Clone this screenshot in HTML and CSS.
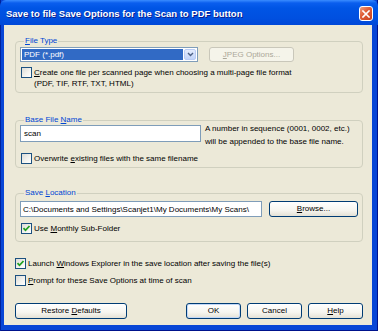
FILE: index.html
```html
<!DOCTYPE html>
<html>
<head>
<meta charset="utf-8">
<link rel="stylesheet" href="styles.css">
</head>
<body>
<div class="window">
  <div class="titlebar">
    <span class="title">Save to file Save Options for the Scan to PDF button</span>
    <span class="close"><svg width="8" height="8" viewBox="0 0 8 8"><path d="M1 1L7 7M7 1L1 7" stroke="#fff" stroke-width="1.6" stroke-linecap="square"/></svg></span>
  </div>
  <div class="frame">
    <div class="content">
      <fieldset class="group g1">
        <legend><u>F</u>ile Type</legend>
        <div class="row">
          <div class="combo">
            <span class="combo-val"><span class="sel">PDF (*.pdf)</span></span>
            <span class="combo-btn"><svg width="7" height="5" viewBox="0 0 7 5"><path d="M1 1L3.5 3.5L6 1" fill="none" stroke="#4D6185" stroke-width="1.4"/></svg></span>
          </div>
          <span class="btn disabled jpeg"><span><u>J</u>PEG Options...</span></span>
        </div>
        <div class="check c-multi">
          <span class="box"></span>
          <span class="ctext"><u>C</u>reate one file per scanned page when choosing a multi-page file format<br>(PDF, TIF, RTF, TXT, HTML)</span>
        </div>
      </fieldset>

      <fieldset class="group g2">
        <legend>Base File <u>N</u>ame</legend>
        <div class="row">
          <span class="input in-name">scan</span>
          <span class="note">A number in sequence (0001, 0002, etc.)<br>will be appended to the base file name.</span>
        </div>
        <div class="check c-over">
          <span class="box"></span>
          <span class="ctext">Overwrite <u>e</u>xisting files with the same filename</span>
        </div>
      </fieldset>

      <fieldset class="group g3">
        <legend>Save <u>L</u>ocation</legend>
        <div class="row">
          <span class="input in-path">C:\Documents and Settings\Scanjet1\My Documents\My Scans\</span>
          <span class="btn browse"><span><u>B</u>rowse...</span></span>
        </div>
        <div class="check c-month">
          <span class="box checked"><svg width="9" height="9" viewBox="0 0 9 9"><path d="M1.5 4.2L3.5 6.3L7.5 2" fill="none" stroke="#21A121" stroke-width="1.8"/></svg></span>
          <span class="ctext">Use <u>M</u>onthly Sub-Folder</span>
        </div>
      </fieldset>

      <div class="check c-launch">
        <span class="box checked"><svg width="9" height="9" viewBox="0 0 9 9"><path d="M1.5 4.2L3.5 6.3L7.5 2" fill="none" stroke="#21A121" stroke-width="1.8"/></svg></span>
        <span class="ctext">Launch <u>W</u>indows Explorer in the save location after saving the file(s)</span>
      </div>
      <div class="check c-prompt">
        <span class="box"></span>
        <span class="ctext"><u>P</u>rompt for these Save Options at time of scan</span>
      </div>

      <div class="buttons">
        <span class="btn restore"><span>Restore <u>D</u>efaults</span></span>
        <div class="btn-group">
          <span class="btn ok"><span>OK</span></span>
          <span class="btn"><span>Cancel</span></span>
          <span class="btn"><span><u>H</u>elp</span></span>
        </div>
      </div>
    </div>
  </div>
</div>
</body>
</html>
```

FILE: styles.css
```css
* { box-sizing: border-box; }
html, body { margin: 0; padding: 0; }
body {
  font-family: "Liberation Sans", Arial, sans-serif;
  font-size: 8px;
  color: #000;
  background: #0842CF;
}
u { text-decoration: underline; text-underline-offset: 1px; }

.window {
  width: 378px;
  height: 331px;
  display: flex;
  flex-direction: column;
  background: #0846D6;
  box-shadow: inset 1px 0 0 #00229C, inset -1px 0 0 #00138C, inset 0 -1px 0 #00138C;
}

.titlebar {
  height: 25px;
  flex: none;
  display: flex;
  align-items: center;
  justify-content: space-between;
  padding: 0 5px 0 6px;
  background: linear-gradient(#3A8CFF 0px, #0A5EEE 3px, #0055E5 8px, #0050E0 18px, #0048D8 25px);
  border-radius: 6px 6px 0 0;
}
.title {
  color: #fff;
  font-weight: bold;
  font-size: 9.5px;
  padding-top: 2px;
  text-shadow: 1px 1px 0 #0A1E8C;
  white-space: nowrap;
}
.close {
  width: 14px;
  height: 15px;
  margin-top: 2px;
  border: 1px solid #fff;
  border-radius: 3px;
  background: linear-gradient(135deg, #F0A080 0%, #E0603A 40%, #C8401E 100%);
  display: flex;
  align-items: center;
  justify-content: center;
}

.frame {
  flex: 1;
  padding: 0 6px 6px 4px;
  display: flex;
}
.content {
  flex: 1;
  background: #ECE9D8;
  padding: 0 9px 0 11px;
  display: flex;
  flex-direction: column;
}

.group {
  margin: 0;
  border: 1px solid #D0D0BF;
  border-radius: 4px;
  padding: 0 4px 3px 4px;
  min-width: 0;
}
.group legend {
  color: #0046D5;
  line-height: 10px;
  padding: 0 1px;
  margin-left: 4px;
}
.g1 { margin-top: 11px; padding-top: 1px; }
.g2 { margin-top: 22px; padding-top: 0; }
.g3 { margin-top: 20px; padding-top: 3px; padding-bottom: 7px; }

.row { display: flex; align-items: flex-start; }

.combo {
  width: 178px;
  height: 15px;
  border: 1px solid #7F9DB9;
  background: #fff;
  display: flex;
}
.combo-val {
  flex: 1;
  padding: 1px;
  display: flex;
}
.sel {
  flex: 1;
  background: #316AC5;
  color: #fff;
  line-height: 11px;
  padding-left: 2px;
}
.combo-btn {
  width: 12px;
  margin: 1px 1px 1px 0;
  border: 1px solid #B9CCF5;
  border-radius: 2px;
  background: linear-gradient(#E4ECFD, #C2D4F9);
  display: flex;
  align-items: center;
  justify-content: center;
}

.btn {
  height: 16px;
  border: 1px solid #003C74;
  border-radius: 3px;
  background: linear-gradient(#FFFFFF 0%, #F6F5EF 60%, #E4E1D6 100%);
  display: flex;
  align-items: center;
  justify-content: center;
  line-height: 10px;
  white-space: nowrap;
}
.btn.disabled {
  border-color: #C9C7BA;
  background: #F5F4EA;
  color: #ACA899;
}
.jpeg { width: 85px; height: 15px; margin-left: 11px; }

.input {
  border: 1px solid #7F9DB9;
  background: #fff;
  padding-left: 3px;
  display: flex;
  align-items: center;
  white-space: nowrap;
  overflow: hidden;
}
.in-name { width: 181px; height: 17px; }
.note { margin-left: 4px; margin-top: -3px; line-height: 13px; white-space: nowrap; }
.in-path { width: 242px; height: 16px; padding-left: 2px; }
.browse { width: 89px; margin-left: 7px; }

.check {
  display: flex;
  align-items: flex-start;
  line-height: 11px;
  white-space: nowrap;
}
.box {
  width: 11px;
  height: 11px;
  flex: none;
  border: 1px solid #1C5180;
  background: linear-gradient(135deg, #DCDCD7 0%, #F4F4F0 60%, #FFFFFF 100%);
  margin-right: 2px;
  display: flex;
  align-items: center;
  justify-content: center;
}
.c-multi { margin-top: 5px; margin-left: 1px; }
.c-over { margin-top: 5px; margin-left: 1px; }
.c-month { margin-top: 6px; margin-left: 1px; }
.c-launch { margin-top: 16px; }
.c-prompt { margin-top: 6px; }

.buttons {
  margin-top: 17px;
  display: flex;
  justify-content: space-between;
}
.restore { width: 112px; }
.btn-group { display: flex; gap: 6px; }
.btn-group .btn { width: 55px; }
.ok { box-shadow: inset 0 0 0 1px #C2D8F8; }
```
